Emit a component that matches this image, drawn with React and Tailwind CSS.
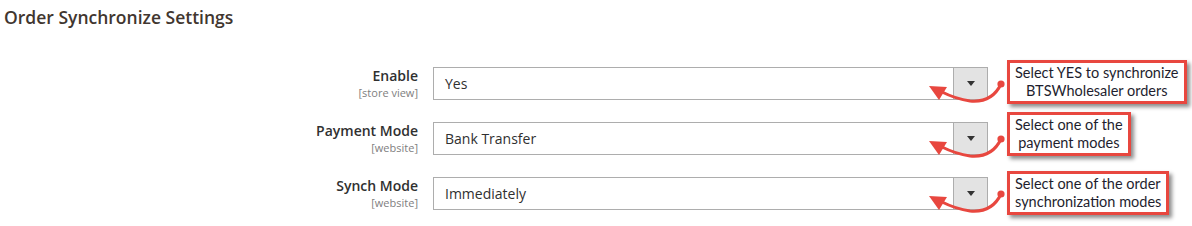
const rows = [
  {
    label: "Enable",
    scope: "[store view]",
    value: "Yes",
    note: ["Select YES to synchronize", "BTSWholesaler orders"],
    noteTop: "-top-[7px]",
    center: true,
  },
  {
    label: "Payment Mode",
    scope: "[website]",
    value: "Bank Transfer",
    note: ["Select one of the", "payment modes"],
    noteTop: "-top-[10px]",
    center: true,
  },
  {
    label: "Synch Mode",
    scope: "[website]",
    value: "Immediately",
    note: ["Select one of the order", "synchronization modes"],
    noteTop: "-top-[6px]",
    center: false,
  },
];

function CurvedArrow() {
  return (
    <svg
      className="absolute left-[920px] top-0"
      width="90"
      height="45"
      viewBox="0 0 90 45"
    >
      <path
        d="M81 17 Q72 36 50 34 Q36 32 22 25"
        fill="none"
        stroke="#e8473f"
        strokeWidth="3"
        strokeLinecap="round"
      />
      <polygon points="9,19 27,20 19,33" fill="#e8473f" />
      <circle cx="81" cy="17" r="3.6" fill="#e8473f" />
    </svg>
  );
}

function SettingRow({ row }) {
  return (
    <div className="relative flex items-start">
      <div className="w-[418px] text-right">
        <div className="text-[14px] leading-[18px] font-semibold text-[#303030]">
          {row.label}
        </div>
        <div className="text-[11px] leading-[13px] mt-[1px] text-[#808080]">
          {row.scope}
        </div>
      </div>

      <div className="ml-[15px] w-[555px] h-[33px] border border-[#adadad] bg-white flex">
        <div className="flex-1 flex items-center pl-[11px] text-[14px] text-[#303030]">
          {row.value}
        </div>
        <div className="w-[34px] h-full bg-[#e3e3e3] border-l border-[#adadad] flex items-center justify-center">
          <span className="w-0 h-0 border-l-[4px] border-r-[4px] border-t-[5px] border-l-transparent border-r-transparent border-t-[#333]" />
        </div>
      </div>

      <CurvedArrow />

      <div
        className={`absolute left-[1007px] ${row.noteTop} border-[3px] border-[#e8473f] bg-white px-[5px] py-[1px] shadow-[3px_3px_4px_rgba(0,0,0,0.45)] whitespace-nowrap text-[14.5px] leading-[18px] text-[#1e1e2e] ${
          row.center ? "text-center" : "text-left"
        }`}
        style={{ fontFamily: "Lato, 'Liberation Sans', sans-serif" }}
      >
        {row.note[0]}
        <br />
        {row.note[1]}
      </div>
    </div>
  );
}

export default function App() {
  return (
    <div
      className="w-[1192px] h-[226px] bg-white overflow-hidden"
      style={{ fontFamily: "'Open Sans', 'Liberation Sans', sans-serif" }}
    >
      <h2 className="pl-[4px] pt-[6px] text-[17.5px] leading-[22px] font-semibold text-[#41362f]">
        Order Synchronize Settings
      </h2>

      <div className="mt-[39px] flex flex-col gap-[22px]">
        {rows.map((row) => (
          <SettingRow key={row.label} row={row} />
        ))}
      </div>
    </div>
  );
}
